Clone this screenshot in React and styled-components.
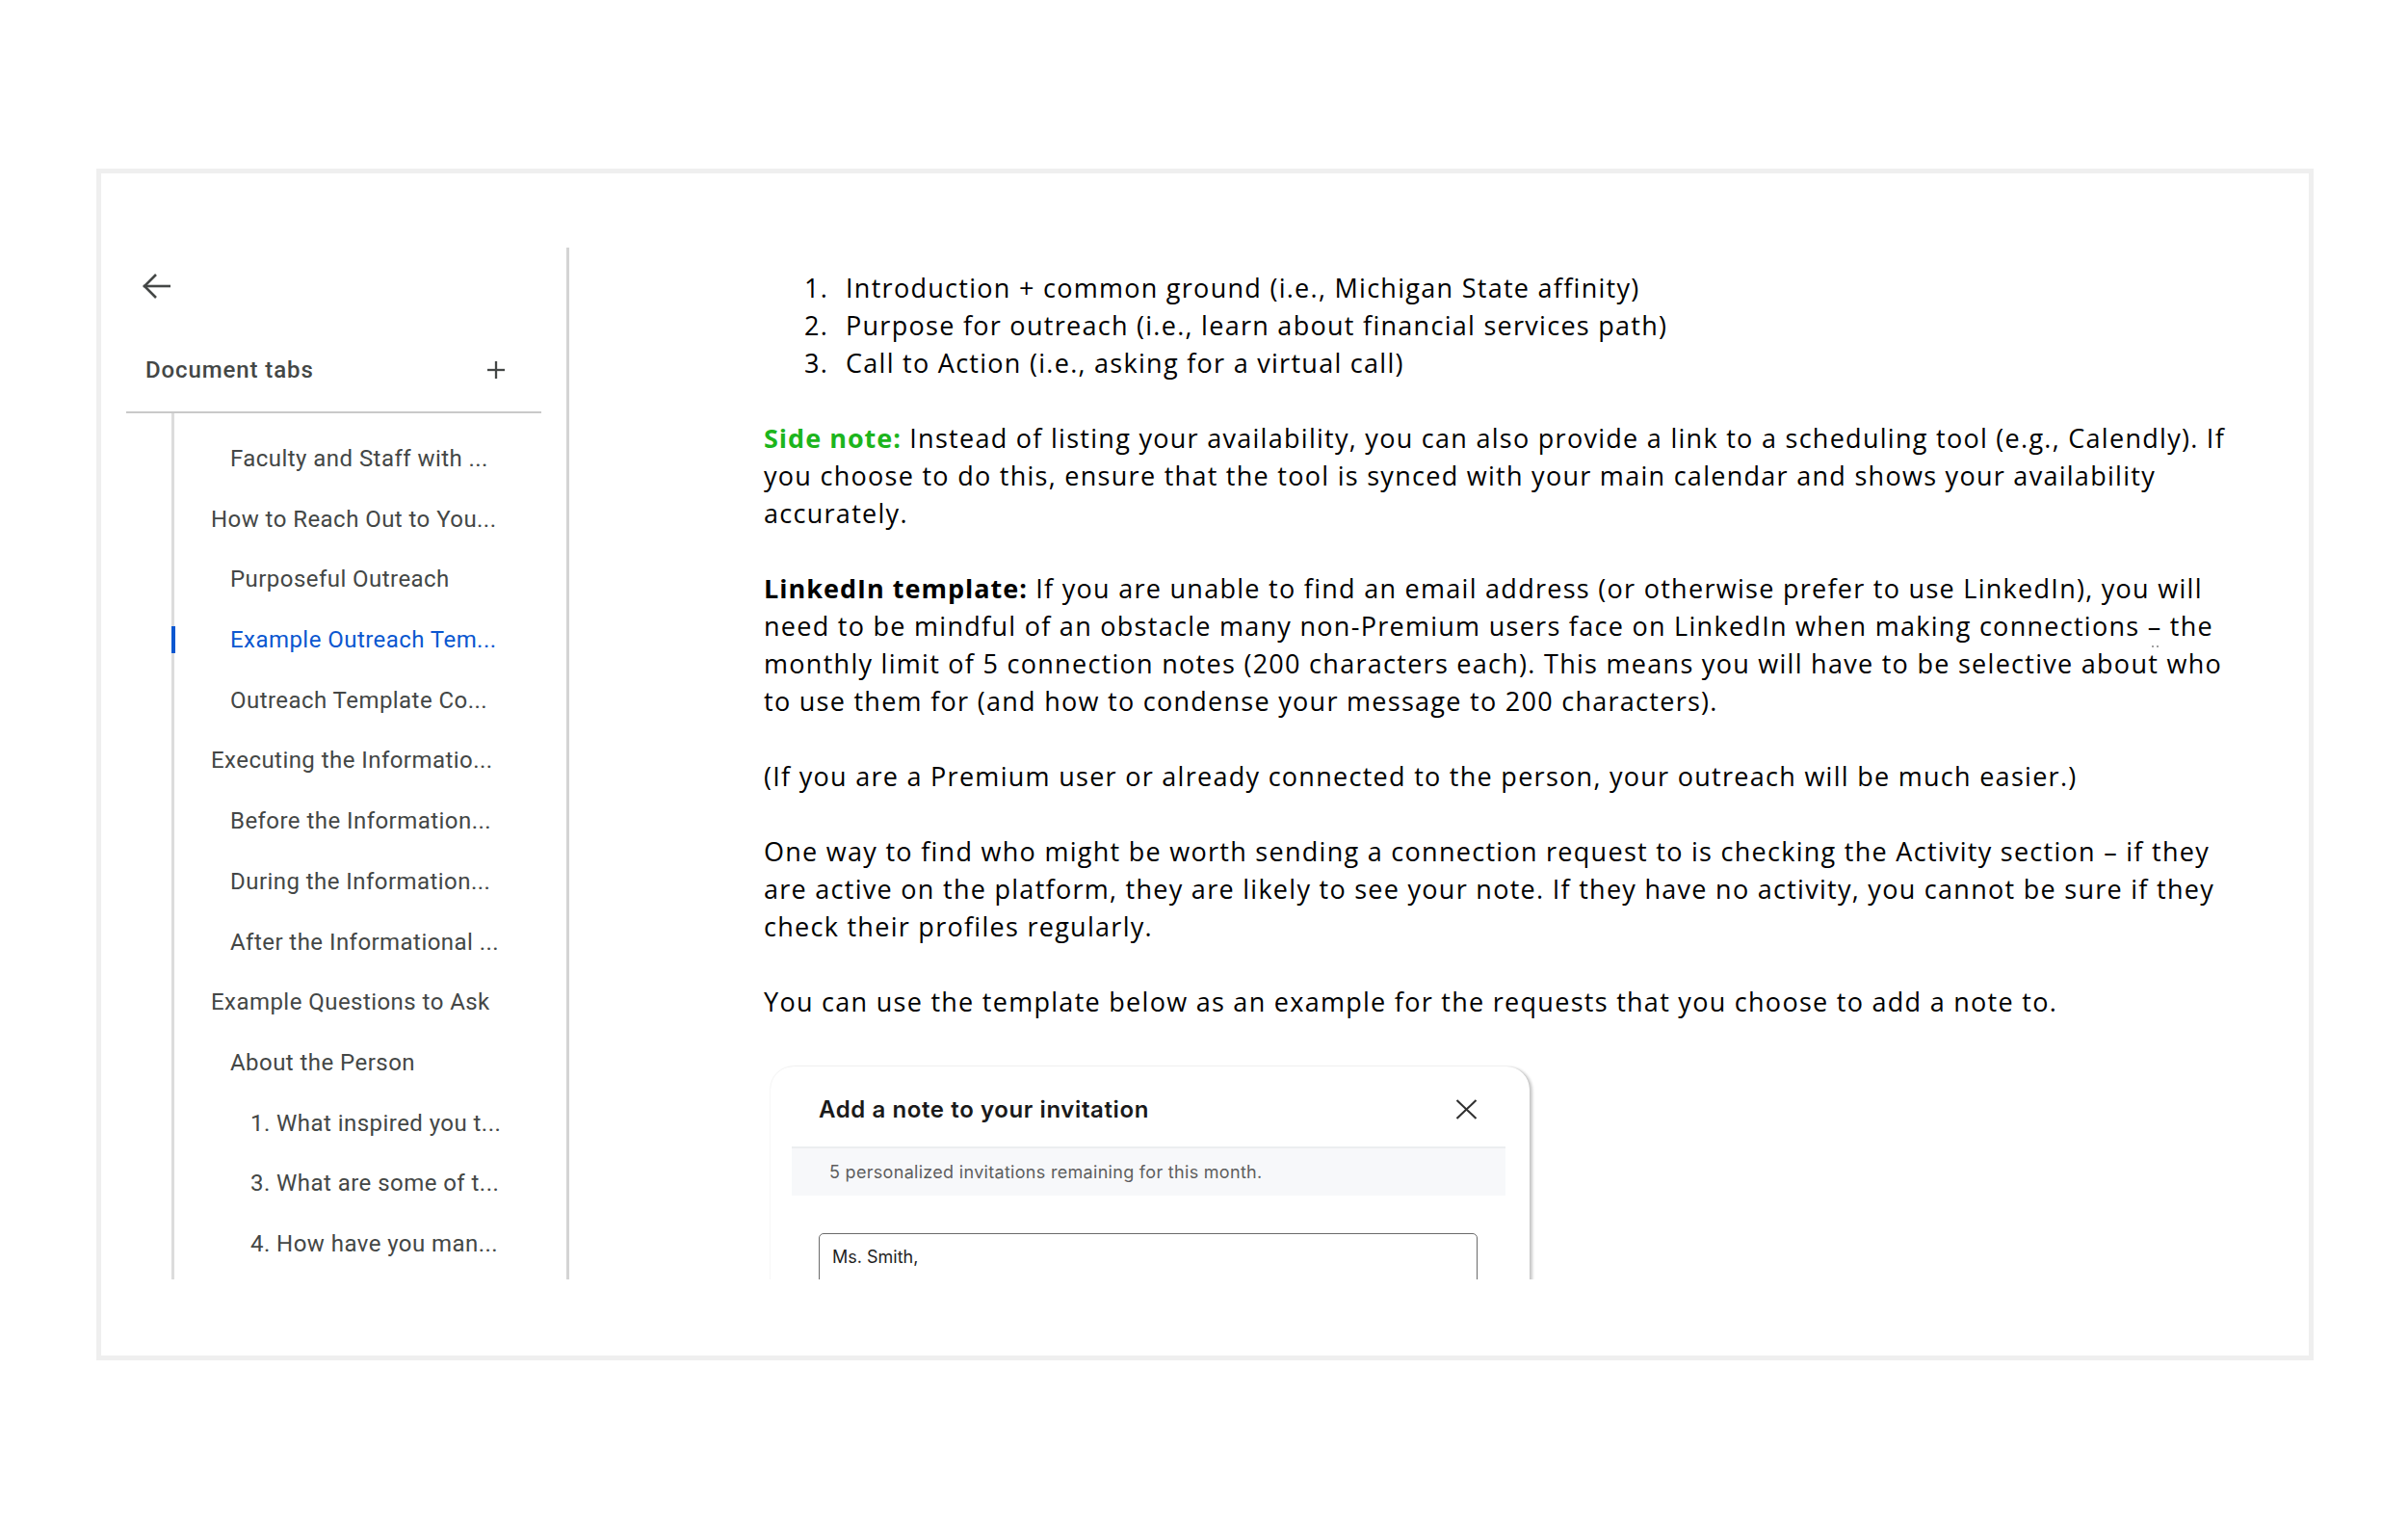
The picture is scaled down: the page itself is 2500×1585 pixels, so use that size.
import React from 'react';
import styled, { createGlobalStyle } from 'styled-components';

const GlobalStyle = createGlobalStyle`
    html, body {
        margin: 0;
        padding: 0;
        background: #ffffff;
    }
`

const tabs = [
    { label: 'Faculty and Staff with ...', level: 2 },
    { label: 'How to Reach Out to You...', level: 1 },
    { label: 'Purposeful Outreach', level: 2 },
    { label: 'Example Outreach Tem...', level: 2, active: true },
    { label: 'Outreach Template Co...', level: 2 },
    { label: 'Executing the Informatio...', level: 1 },
    { label: 'Before the Information...', level: 2 },
    { label: 'During the Information...', level: 2 },
    { label: 'After the Informational ...', level: 2 },
    { label: 'Example Questions to Ask', level: 1 },
    { label: 'About the Person', level: 2 },
    { label: '1. What inspired you t...', level: 3 },
    { label: '3. What are some of t...', level: 3 },
    { label: '4. How have you man...', level: 3 },
]

const steps = [
    'Introduction + common ground (i.e., Michigan State affinity)',
    'Purpose for outreach (i.e., learn about financial services path)',
    'Call to Action (i.e., asking for a virtual call)',
]

const BackIcon = () => (
    <svg width="30" height="30" viewBox="0 0 30 30" fill="none" stroke="#444746" strokeWidth="2.6" strokeLinecap="square">
        <line x1="3" y1="15" x2="29" y2="15" />
        <polyline points="15,3 3,15 15,27" strokeLinecap="butt" />
    </svg>
)

const PlusIcon = () => (
    <svg width="18" height="18" viewBox="0 0 18 18" stroke="#444746" strokeWidth="2.3">
        <line x1="9" y1="0" x2="9" y2="18" />
        <line x1="0" y1="9" x2="18" y2="9" />
    </svg>
)

const CloseIcon = () => (
    <svg width="23" height="21" viewBox="0 0 23 21" stroke="#2f2f2f" strokeWidth="2.1">
        <line x1="1.5" y1="1" x2="21.5" y2="20" />
        <line x1="21.5" y1="1" x2="1.5" y2="20" />
    </svg>
)

const App = () => {
    return (
        <Page>
            <GlobalStyle />
            <Frame>
                <Viewport>
                    <Sidebar>
                        <BackRow>
                            <BackIcon />
                        </BackRow>
                        <TabsHeader>
                            <span>Document tabs</span>
                            <PlusIcon />
                        </TabsHeader>
                        <Divider />
                        <Tree>
                            {tabs.map((t) => (
                                <TreeItem key={t.label} level={t.level} active={t.active}>
                                    {t.label}
                                </TreeItem>
                            ))}
                        </Tree>
                    </Sidebar>

                    <Main>
                        <Steps>
                            {steps.map((s, i) => (
                                <Step key={s}>
                                    <StepNum>{i + 1}.</StepNum>
                                    <span>{s}</span>
                                </Step>
                            ))}
                        </Steps>

                        <Para>
                            <Green>Side note:</Green> Instead of listing your availability, you can also provide a link to a scheduling tool (e.g., Calendly). If<br />
                            you choose to do this, ensure that the tool is synced with your main calendar and shows your availability<br />
                            accurately.
                        </Para>

                        <Para>
                            <b>LinkedIn template:</b> If you are unable to find an email address (or otherwise prefer to use LinkedIn), you will<br />
                            need to be mindful of an obstacle many non-Premium users face on LinkedIn when making connections <Marked>–</Marked> the<br />
                            monthly limit of 5 connection notes (200 characters each). This means you will have to be selective about who<br />
                            to use them for (and how to condense your message to 200 characters).
                        </Para>

                        <Para>
                            (If you are a Premium user or already connected to the person, your outreach will be much easier.)
                        </Para>

                        <Para>
                            One way to find who might be worth sending a connection request to is checking the Activity section – if they<br />
                            are active on the platform, they are likely to see your note. If they have no activity, you cannot be sure if they<br />
                            check their profiles regularly.
                        </Para>

                        <Para>
                            You can use the template below as an example for the requests that you choose to add a note to.
                        </Para>

                        <Dialog>
                            <DialogHeader>
                                <DialogTitle>Add a note to your invitation</DialogTitle>
                                <CloseIcon />
                            </DialogHeader>
                            <Notice>5 personalized invitations remaining for this month.</Notice>
                            <NoteBox>Ms. Smith,</NoteBox>
                        </Dialog>
                    </Main>
                </Viewport>
            </Frame>
        </Page>
    )
}


const Page = styled.div`
    width: 2500px;
    height: 1585px;
    box-sizing: border-box;
    padding: 175px 0 0 100px;
    background: #ffffff;
`

const Frame = styled.div`
    width: 2302px;
    height: 1237px;
    box-sizing: border-box;
    border: 5px solid #efefef;
    padding-top: 77px;
`

const Viewport = styled.div`
    display: flex;
    height: 1071px;
    overflow: hidden;
`

const Sidebar = styled.aside`
    width: 483px;
    flex-shrink: 0;
    display: flex;
    flex-direction: column;
    border-right: 3px solid #d4d4d4;
    font-family: Roboto, "Noto Sans", sans-serif;
    color: #444746;
`

const BackRow = styled.div`
    padding: 25px 0 0 42px;
    height: 30px;

    svg {
        display: block;
    }
`

const TabsHeader = styled.div`
    display: flex;
    align-items: center;
    justify-content: space-between;
    height: 48px;
    margin: 48px 64px 0 46px;
    font-size: 24px;
    font-weight: 500;
    letter-spacing: 0.9px;
`

const Divider = styled.div`
    height: 2px;
    margin: 19px 26px 0 26px;
    background: #c9c9c9;
`

const Tree = styled.div`
    flex: 1;
    margin-left: 73px;
    padding-top: 16px;
    border-left: 3px solid #dcdcdc;
`

const TreeItem = styled.div`
    position: relative;
    height: 62.7px;
    line-height: 62.7px;
    font-size: 24px;
    letter-spacing: 0.45px;
    white-space: nowrap;
    padding-left: ${(p) => (p.level === 1 ? 38 : p.level === 2 ? 58 : 79)}px;
    color: ${(p) => (p.active ? '#0b57d0' : '#444746')};

    &::before {
        content: '';
        display: ${(p) => (p.active ? 'block' : 'none')};
        position: absolute;
        left: -3px;
        top: 17px;
        width: 4px;
        height: 28px;
        background: #0b57d0;
    }
`

const Main = styled.main`
    flex: 1;
    padding: 22px 0 0 202px;
    font-family: "Open Sans", "Noto Sans", sans-serif;
    font-size: 27px;
    line-height: 39px;
    letter-spacing: 1.28px;
    color: #000000;
`

const Steps = styled.div`
    margin-bottom: 39px;
`

const Step = styled.div`
    display: flex;
    white-space: nowrap;
`

const StepNum = styled.span`
    width: 43px;
    margin-left: 42px;
`

const Para = styled.p`
    margin: 0 0 39px 0;
    white-space: nowrap;

    b {
        font-weight: 700;
        letter-spacing: 1px;
    }
`

const Green = styled.b`
    color: #1cb51c;
`

const Marked = styled.span`
    position: relative;

    &::after {
        content: '';
        position: absolute;
        left: 50%;
        bottom: -4px;
        width: 7px;
        margin-left: -3px;
        border-bottom: 2px dotted #a0a0a0;
    }
`

const Dialog = styled.div`
    width: 788px;
    height: 260px;
    margin: 48px 0 0 7px;
    box-sizing: border-box;
    border-radius: 24px 24px 0 0;
    background: #ffffff;
    box-shadow: 0 0 2px rgba(0, 0, 0, 0.12), 3px 1px 3px rgba(0, 0, 0, 0.2);
    font-family: Inter, Roboto, "Liberation Sans", sans-serif;
    letter-spacing: 0;
    overflow: hidden;
`

const DialogHeader = styled.div`
    display: flex;
    align-items: center;
    justify-content: space-between;
    height: 83px;
    padding: 6px 54px 0 50px;
    box-sizing: border-box;

    svg {
        display: block;
    }
`

const DialogTitle = styled.div`
    font-size: 24px;
    font-weight: 600;
    color: #1a1a1a;
    letter-spacing: 0.6px;
`

const Notice = styled.div`
    height: 51px;
    margin: 0 25px 0 22px;
    padding-left: 39px;
    box-sizing: border-box;
    border-top: 2px solid #eceef0;
    background: #f7f8fa;
    font-size: 18px;
    line-height: 49px;
    letter-spacing: 0.3px;
    color: #5e5e5e;
`

const NoteBox = styled.div`
    height: 120px;
    margin: 39px 54px 0 50px;
    padding: 12px 13px;
    box-sizing: border-box;
    border: 1.5px solid #6b6b6b;
    border-radius: 5px;
    font-size: 18px;
    line-height: 24px;
    color: #1f1f1f;
`

export default App;
